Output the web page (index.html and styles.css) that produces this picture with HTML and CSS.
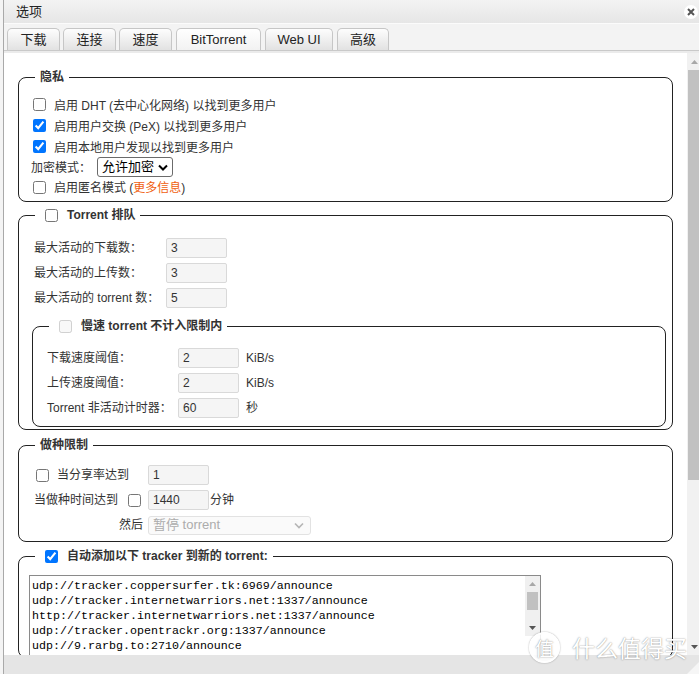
FILE: index.html
```html
<!DOCTYPE html>
<html lang="zh-CN">
<head>
<meta charset="utf-8">
<title>选项</title>
<link rel="stylesheet" href="styles.css">
</head>
<body>
<div class="screen">
  <div class="bgstrip"></div>
  <div class="dialog">
    <div class="titlebar">
      <span class="title">选项</span>
      <span class="close"><svg width="8" height="8" viewBox="0 0 8 8"><path d="M1 1L7 7M7 1L1 7" stroke="#555" stroke-width="2"/></svg></span>
    </div>
    <div class="tabbar">
      <div class="tab">下载</div>
      <div class="tab">连接</div>
      <div class="tab">速度</div>
      <div class="tab active">BitTorrent</div>
      <div class="tab">Web UI</div>
      <div class="tab">高级</div>
    </div>
    <div class="tabline"></div>
    <div class="main">
      <div class="content">
        <fieldset class="fs fs1">
          <legend>隐私</legend>
          <div class="row r21"><input class="cb" type="checkbox"><label>启用 DHT (去中心化网络) 以找到更多用户</label></div>
          <div class="row r21"><input class="cb" type="checkbox" checked><label>启用用户交换 (PeX) 以找到更多用户</label></div>
          <div class="row r21"><input class="cb" type="checkbox" checked><label>启用本地用户发现以找到更多用户</label></div>
          <div class="row r20"><label class="enc-label">加密模式：</label><div class="select sel-enc"><span>允许加密</span><svg width="10" height="7" viewBox="0 0 10 7"><path d="M1 1.5l4 4 4-4" fill="none" stroke="#000" stroke-width="2"/></svg></div></div>
          <div class="row r20"><input class="cb" type="checkbox"><label>启用匿名模式 (<span class="link">更多信息</span>)</label></div>
        </fieldset>

        <fieldset class="fs fs2">
          <legend><input class="cb" type="checkbox"><label>Torrent 排队</label></legend>
          <div class="qgrid">
            <label>最大活动的下载数：</label><input class="num" type="text" value="3" readonly>
            <label>最大活动的上传数：</label><input class="num" type="text" value="3" readonly>
            <label>最大活动的 torrent 数：</label><input class="num" type="text" value="5" readonly>
          </div>
          <fieldset class="fs inner">
            <legend><input class="cb" type="checkbox" disabled><label>慢速 torrent 不计入限制内</label></legend>
            <div class="sgrid">
              <label>下载速度阈值：</label><input class="num" type="text" value="2" readonly><span class="unit">KiB/s</span>
              <label>上传速度阈值：</label><input class="num" type="text" value="2" readonly><span class="unit">KiB/s</span>
              <label>Torrent 非活动计时器：</label><input class="num" type="text" value="60" readonly><span class="unit">秒</span>
            </div>
          </fieldset>
        </fieldset>

        <fieldset class="fs fs3">
          <legend>做种限制</legend>
          <div class="seedgrid">
            <div class="cell left"><input class="cb" type="checkbox"><label>当分享率达到</label></div>
            <div class="cell"><input class="num" type="text" value="1" readonly></div>
            <div class="cell right"><label>当做种时间达到</label><input class="cb cb-after" type="checkbox"></div>
            <div class="cell"><input class="num" type="text" value="1440" readonly><span class="min">分钟</span></div>
            <div class="cell right"><label>然后</label></div>
            <div class="cell"><div class="select sel-dis"><span>暂停 torrent</span><svg width="10" height="7" viewBox="0 0 10 7"><path d="M1 1.5l4 4 4-4" fill="none" stroke="#b5b5b5" stroke-width="1.6"/></svg></div></div>
          </div>
        </fieldset>

        <fieldset class="fs fs4">
          <legend><input class="cb" type="checkbox" checked><label>自动添加以下 tracker 到新的 torrent:</label></legend>
          <div class="trackers">
            <div class="tlines">udp://tracker.coppersurfer.tk:6969/announce
udp://tracker.internetwarriors.net:1337/announce
http://tracker.internetwarriors.net:1337/announce
udp://tracker.opentrackr.org:1337/announce
udp://9.rarbg.to:2710/announce</div>
            <div class="tscroll">
              <div class="sarrow"><svg width="7" height="4" viewBox="0 0 7 4"><path d="M0 4L3.5 0L7 4Z" fill="#a8a8a8"/></svg></div>
              <div class="tthumb"></div>
              <div class="ttrack"></div>
              <div class="sarrow"><svg width="7" height="4" viewBox="0 0 7 4"><path d="M0 0L3.5 4L7 0Z" fill="#555"/></svg></div>
              <div class="tcover"></div>
            </div>
          </div>
        </fieldset>
      </div>
      <div class="vscroll">
        <div class="varrow"><svg width="7" height="4" viewBox="0 0 7 4"><path d="M0 4L3.5 0L7 4Z" fill="#a8a8a8"/></svg></div>
        <div class="vthumb"></div>
        <div class="vtrack"></div>
        <div class="varrow"><svg width="7" height="4" viewBox="0 0 7 4"><path d="M0 0L3.5 4L7 0Z" fill="#555"/></svg></div>
      </div>
    </div>
    <div class="statusbar"><span class="grip"></span></div>
  </div>
  <div class="watermark"><span class="wm-logo">值</span><span class="wm-text">什么值得买</span></div>
</div>
</body>
</html>
```
FILE: styles.css
```css
* { box-sizing: border-box; }
html, body { margin: 0; padding: 0; }
body {
  width: 699px; height: 674px; overflow: hidden;
  font-family: "Liberation Sans", "Noto Sans CJK SC", sans-serif;
  font-size: 12px; line-height: 16px; color: #333; background: #fff;
}
.screen { position: relative; display: flex; width: 699px; height: 674px; }
.bgstrip { width: 4px; flex: none; background: #f4f4f4; border-right: 1px solid #a9a9a9; }
.dialog { flex: 1; display: flex; flex-direction: column; min-width: 0; }

.titlebar {
  height: 23px; flex: none; display: flex; align-items: center; justify-content: space-between;
  padding: 0 1px 0 12px; background: linear-gradient(#f3f3f3, #e6e6e6);
}
.title { font-size: 13px; color: #222; }
.close {
  width: 14px; height: 14px; border-radius: 50%; background: #fff;
  display: flex; align-items: center; justify-content: center;
}

.tabbar {
  height: 27px; flex: none; display: flex; align-items: flex-end; gap: 3px;
  padding-left: 3px; background: #f3f3f3; border-top: 1px solid #fbfbfb;
}
.tab {
  height: 22px; display: flex; align-items: center; justify-content: center;
  font-size: 13px; color: #222; border: 1px solid #c6c6c6; border-bottom: none;
  border-radius: 5px 5px 0 0; background: linear-gradient(#fdfdfd, #e2e2e2);
}
.tab:nth-child(1), .tab:nth-child(2), .tab:nth-child(3) { width: 53px; }
.tab:nth-child(4) { width: 85px; margin-left: 1px; }
.tab:nth-child(5) { width: 68px; margin-left: 1px; }
.tab:nth-child(6) { width: 52px; margin-left: 1px; }
.tab.active { background: linear-gradient(#ffffff, #f2f2f2); }
.tabline { height: 3px; flex: none; border-top: 1px solid #c9c9c9; background: #ebebeb; }

.main { flex: 1; display: flex; min-height: 0; }
.content { flex: 1; min-width: 0; overflow: hidden; padding: 16px 14px 0 14px; background: #fff; }

.vscroll { width: 12px; flex: none; display: flex; flex-direction: column; background: #f1f1f1; }
.varrow { height: 17px; flex: none; display: flex; align-items: center; justify-content: center; padding-left: 3px; }
.vthumb { height: 410px; flex: none; background: #c1c1c1; margin-left: 1px; }
.vtrack { flex: 1; }

.statusbar { height: 19px; flex: none; background: #e5e5e5; position: relative; display: flex; justify-content: flex-end; align-items: flex-end; }
.grip { width: 0; height: 0; border-left: 12px solid transparent; border-bottom: 12px solid #f6f6f6; }

/* fieldsets */
.fs { margin: 0; border: 1px solid #222; border-radius: 8px; min-width: 0; padding: 9px 10px 4px 10px; }
.fs legend {
  margin-left: 6px; padding: 0 5px; height: 16px; line-height: 16px;
  font-weight: bold; color: #333; display: flex; align-items: center;
}
.cb { margin: 0 8px 0 4px; width: 13px; height: 13px; flex: none; }
.fs legend .cb { margin: 0 9px 0 5px; }

.row { display: flex; align-items: center; }
.row label { position: relative; top: 1px; }
.r21 { height: 21px; }
.r20 { height: 20px; }
.enc-label { width: 66px; margin-left: 2px; }
.link { color: #f06010; }

.select {
  height: 20px; display: flex; align-items: center; justify-content: space-between;
  font-size: 13px; border-radius: 3px;
}
.sel-enc { width: 76px; border: 1px solid #6b6b6b; color: #000; background: #fff; padding: 0 4px 0 4px; }
.sel-dis { width: 163px; height: 19px; border: 1px solid #e2e2e2; color: #acacac; background: #fafafa; padding: 0 6px 0 4px; }

.fs2 { margin-top: 5px; padding: 15px 6px 2px 10px; }
.qgrid { display: grid; grid-template-columns: 137px 61px; row-gap: 5px; align-items: center; }
.qgrid label { padding-left: 5px; }
.num {
  width: 61px; height: 20px; margin: 0; padding: 0 4px;
  border: 1px solid #d9d9d9; border-radius: 2px; background: #f5f5f5;
  font-family: "Liberation Sans", sans-serif; font-size: 12px; color: #333; outline: none;
}
.inner { margin: 10px 0 0 3px; padding: 14px 10px 8px 10px; }
.sgrid { display: grid; grid-template-columns: 135px 61px auto; row-gap: 5px; align-items: center; }
.sgrid label { padding-left: 4px; }
.unit { margin-left: 7px; }

.fs3 { margin-top: 7px; padding: 12px 10px 6px 10px; }
.seedgrid { display: grid; grid-template-columns: 119px auto; row-gap: 5px; align-items: center; }
.cell { display: flex; align-items: center; height: 20px; }
.cell.left { padding-left: 3px; }
.cell.right { justify-content: flex-end; padding-right: 5px; }
.cb-after { margin: 0 2px 0 10px; }
.min { margin-left: 1px; }

.fs4 { margin-top: 6px; padding: 11px 10px 0 10px; }
.trackers { display: flex; width: 512px; height: 82px; border: 1px solid #8a8a8a; border-bottom: none; background: #fff; }
.tlines {
  flex: 1; min-width: 0; overflow: hidden; padding: 3px 2px 0 2px;
  font-family: "Liberation Mono", monospace; font-size: 11.67px; line-height: 15px;
  color: #000; white-space: pre;
}
.tscroll { width: 15px; flex: none; display: flex; flex-direction: column; background: #f0f0f0; }
.sarrow { height: 16px; flex: none; display: flex; align-items: center; justify-content: center; }
.tthumb { height: 18px; flex: none; margin: 0 2px; background: #c1c1c1; }
.ttrack { height: 10px; flex: none; }
.tcover { flex: 1; background: #fff; }

/* watermark overlay */
.watermark {
  position: absolute; left: 529px; top: 632px;
  display: flex; align-items: center; gap: 12px;
}
.wm-logo {
  width: 31px; height: 31px; border-radius: 50%;
  background: rgba(255,255,255,0.85); border: 2px solid #fff;
  box-shadow: 0 0 1.5px rgba(0,0,0,0.45);
  display: flex; align-items: center; justify-content: center;
  font-family: "Noto Sans CJK SC", sans-serif; font-size: 19px; line-height: 1;
  color: #fff; text-shadow: 0 0 1.5px rgba(0,0,0,0.55);
}
.wm-text {
  font-family: "Noto Sans CJK SC", sans-serif; font-size: 23px; line-height: 1;
  color: #fff; text-shadow: 0 0 1.5px rgba(0,0,0,0.55);
}
```
